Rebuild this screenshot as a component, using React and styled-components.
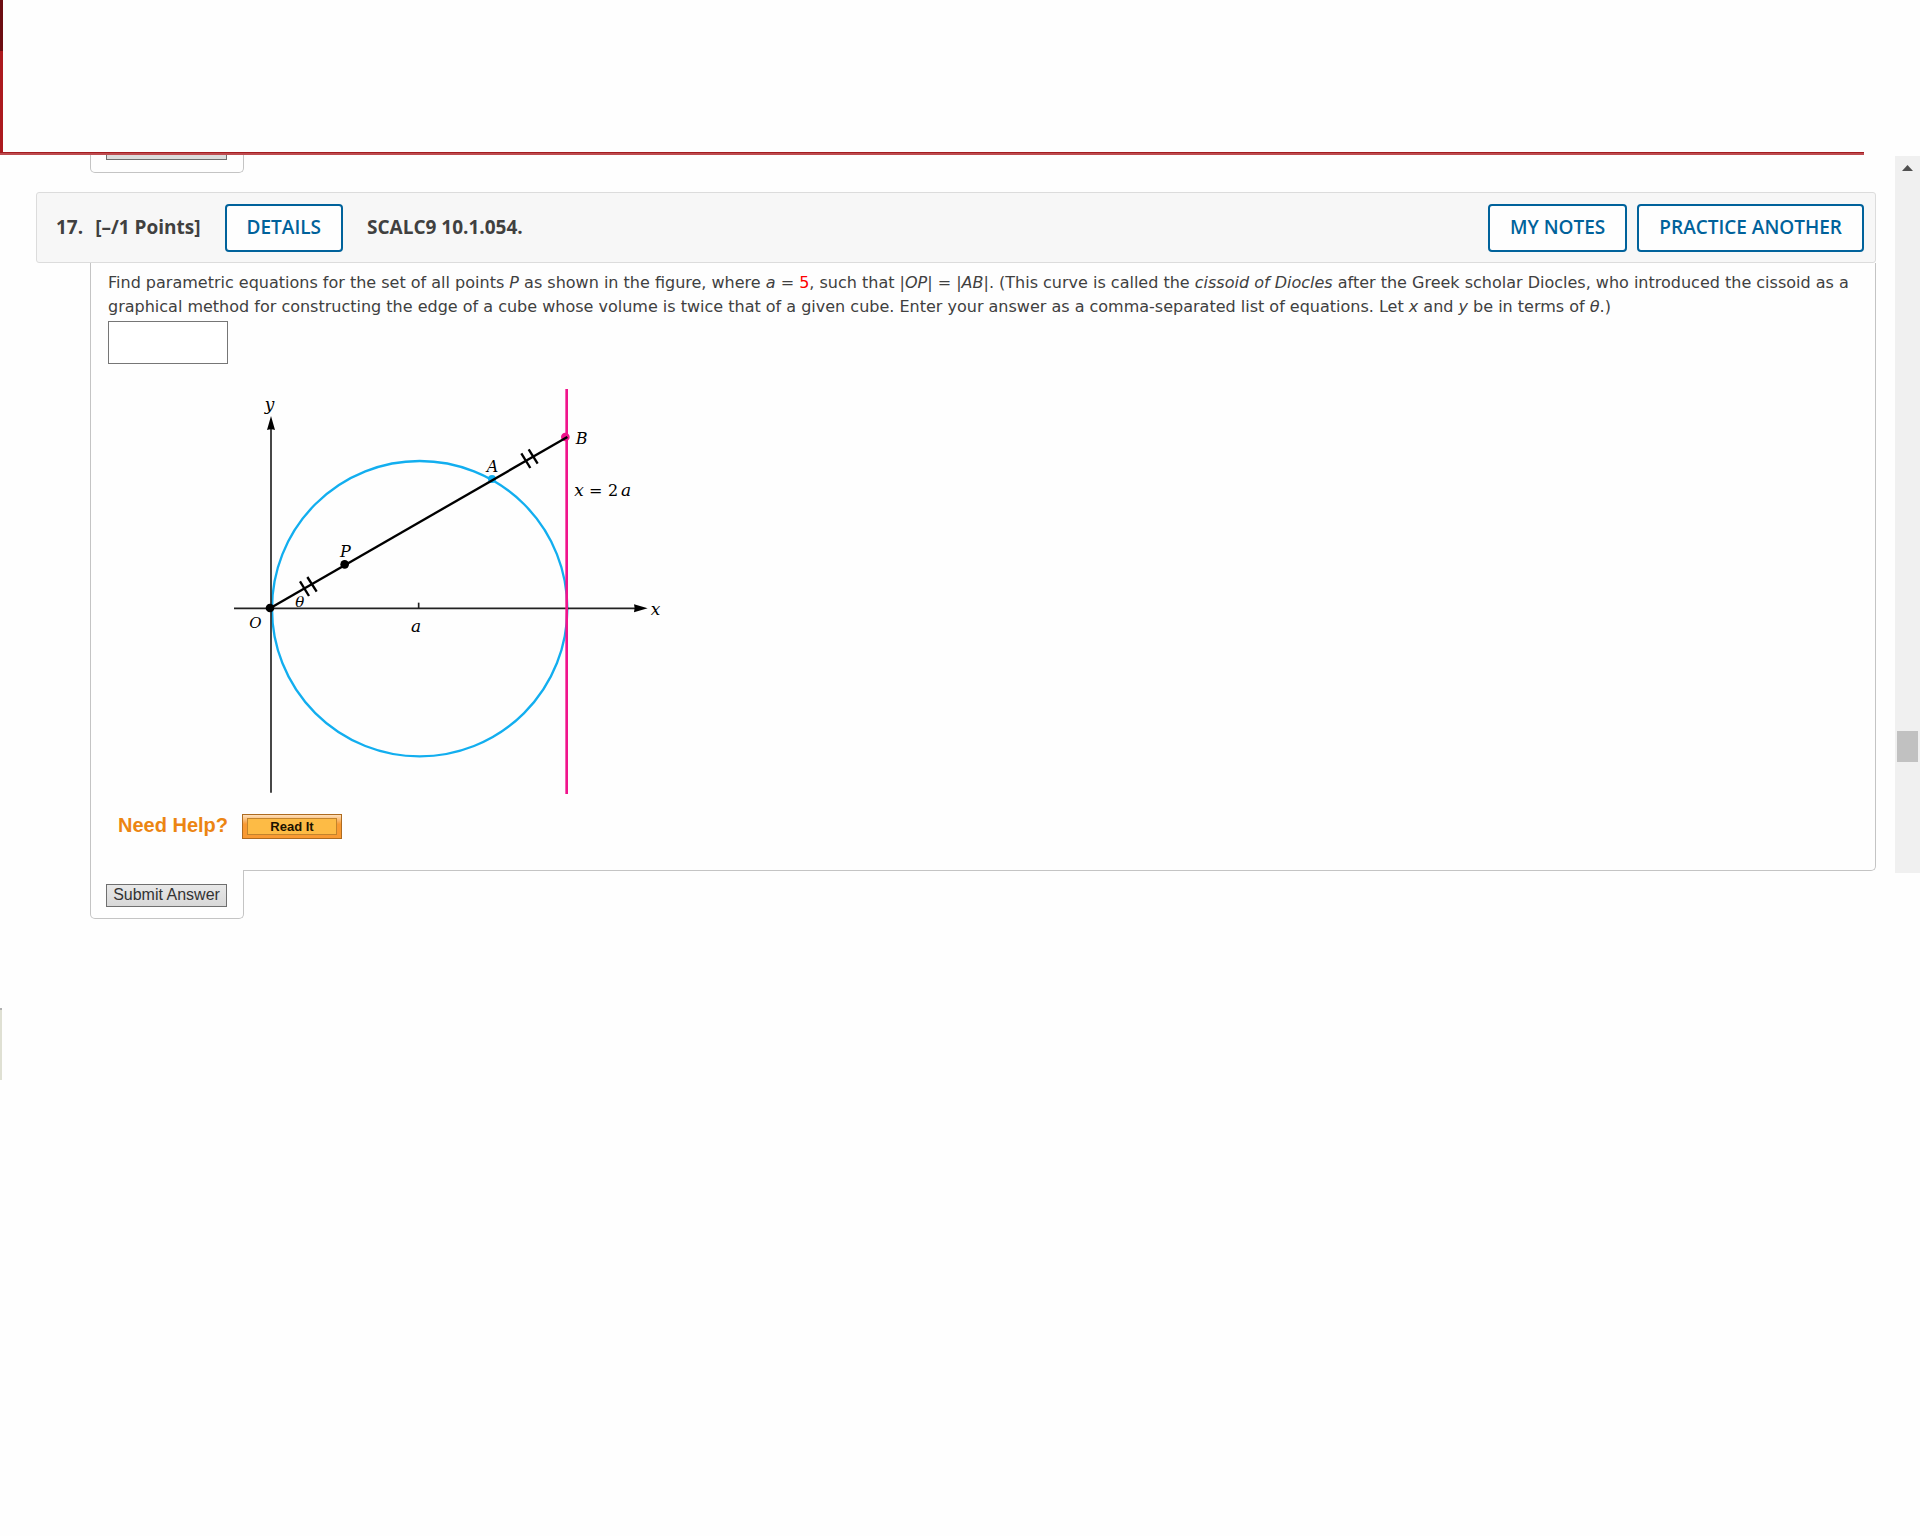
import React, { useState } from 'react';
import styled, { createGlobalStyle } from 'styled-components';

const GlobalStyle = createGlobalStyle`
  * {
    box-sizing: border-box;
  }

  body {
    margin: 0;
    background: #fefefe;
    color: #404040;
    font-family: 'DejaVu Sans', Verdana, sans-serif;
  }
`;

// Styled Components
const Banner = styled.header`
  display: flex;
  height: 152px;
`;

const BannerEdge = styled.div`
  width: 3px;
  background: linear-gradient(#6d0d12 51px, #ac1a1e 51px);
`;

const BannerRule = styled.div`
  height: 3px;
  margin-right: 56px;
  border-top: 1px solid #a51c20;
  background: #bd4b4f;
`;

const Workspace = styled.div`
  display: flex;
`;

const Main = styled.main`
  flex: 1;
  min-width: 0;
  padding: 0 19px 2px 36px;
`;

const SubmitTab = styled.div`
  position: relative;
  width: 154px;
  margin-left: ${({ $indent }) => $indent}px;
  padding: ${({ $clipped }) => ($clipped ? '0 16px 12px 15px' : '14px 16px 11px 15px')};
  border: 1px solid #c4c4c4;
  border-top: none;
  border-radius: 0 0 5px 5px;
  background: #fefefe;
`;

const CutButton = styled.div`
  height: 5px;
  border: 1px solid #6f6f6f;
  border-top: none;
  background: #dcdcdc;
`;

const SubmitRow = styled.div`
  margin-top: -3px;
`;

const SubmitButton = styled.button`
  display: block;
  width: 100%;
  height: 23px;
  padding: 0 0 2px;
  border: 1px solid #6f6f6f;
  border-radius: 0;
  background: linear-gradient(#e8e8e8, #d8d8d8);
  color: #333;
  font-family: 'Liberation Sans', Arial, sans-serif;
  font-size: 16px;
  line-height: 18px;
`;

const QuestionBar = styled.div`
  display: flex;
  align-items: center;
  margin-top: 19px;
  padding: 11px 11px 10px;
  border: 1px solid #dcdcdc;
  border-radius: 3px;
  background: #f7f7f7;
  font-family: 'Open Sans', sans-serif;
  font-size: 19px;
  font-weight: 700;
  line-height: 24px;
`;

const BarText = styled.span`
  padding-bottom: 2px;
`;

const Number = styled(BarText)`
  margin-left: 8px;
`;

const Points = styled(BarText)`
  margin: 0 24px 0 12px;
`;

const Source = styled(BarText)`
  flex: 1;
  margin-left: 24px;
`;

const BarButton = styled.button`
  height: 48px;
  padding: 0 20px 2px;
  border: 2px solid #00629b;
  border-radius: 4px;
  background: #fefefe;
  color: #00629b;
  font-family: inherit;
  font-size: 19px;
  font-weight: 600;
  white-space: nowrap;

  & + & {
    margin-left: 10px;
  }
`;

const QuestionBody = styled.section`
  margin-left: 54px;
  padding: 8px 17px 31px;
  border: 1px solid #c4c4c4;
  border-top: none;
  border-radius: 0 0 5px 0;
`;

const Prompt = styled.p`
  margin: 0;
  font-size: 16px;
  line-height: 24px;
`;

const Value = styled.span`
  color: #ff0000;
`;

const AnswerInput = styled.input`
  display: block;
  width: 120px;
  height: 43px;
  margin-top: 2px;
  padding: 0 8px;
  border: 1px solid #767676;
  background: #fff;
  font-size: 16px;
`;

const Figure = styled.svg`
  display: block;
  width: 460px;
  height: 430px;
  margin: 16px 0 0 112px;

  text {
    fill: #000;
    font-family: 'DejaVu Serif', 'Liberation Serif', serif;
    font-size: 48px;
    font-style: italic;
  }

  .large {
    font-size: 51px;
  }

  .small {
    font-size: 45px;
  }

  .upright {
    font-style: normal;
  }
`;

const HelpRow = styled.div`
  display: flex;
  align-items: center;
  margin: 4px 0 0 10px;
  gap: 14px;
  font-family: 'Liberation Sans', Arial, sans-serif;
  font-weight: 700;
`;

const HelpLabel = styled.span`
  padding-bottom: 2px;
  color: #ec8512;
  font-size: 20px;
  line-height: 23px;
`;

const HelpButton = styled.button`
  width: 100px;
  height: 25px;
  padding: 3px 4px;
  border: 1px solid #ae6b20;
  border-radius: 0;
  background: linear-gradient(#fde0bd, #f99a32 40%);
  font: inherit;

  span {
    display: block;
    border: 1px solid #c2832c;
    background: #fdbb45;
    color: #1c1200;
    font-size: 13px;
    line-height: 15px;
  }
`;

const ScrollBar = styled.div`
  display: flex;
  flex-direction: column;
  justify-content: space-between;
  width: 25px;
  margin-top: 1px;
  padding: 0 2px 111px;
  background: #f0f0f0;
`;

const ScrollUp = styled.button`
  height: 24px;
  padding: 0 0 0 5px;
  border: none;
  background: none;

  svg {
    display: block;
  }
`;

const ScrollThumb = styled.div`
  height: 31px;
  background: #c1c1c1;
`;

const EdgeStrip = styled.div`
  width: 2px;
  height: 72px;
  margin-top: 89px;
  border-top: 2px solid #b0b0b0;
  background: #dfe0d3;
`;

function CissoidFigure() {
  return (
    <Figure viewBox="0 0 1380 1290" role="img" aria-label="Cissoid of Diocles">
      <circle cx="599" cy="686" r="443" fill="none" stroke="#12aeef" strokeWidth="7" />
      <g stroke="#222" strokeWidth="5">
        <path d="M153 140V1238" />
        <path d="M42 685H1250" />
        <path d="M596 668V685" />
      </g>
      <path d="M153 108L165 150Q153 145 141 150Z" />
      <path d="M1283 685L1242 697Q1246 685 1242 673Z" />
      <path d="M1040 27V1242" stroke="#f0148c" strokeWidth="8" />
      <circle cx="1036" cy="171" r="13" fill="#f0148c" />
      <circle cx="816" cy="297" r="12" fill="#12aeef" />
      <path d="M150 685L1042 171" stroke="#000" strokeWidth="7" />
      <g stroke="#000" strokeWidth="7">
        <path d="M240 604L267 648" />
        <path d="M262 591L290 635" />
        <path d="M904 220L931 264" />
        <path d="M926 208L953 251" />
      </g>
      <circle cx="150" cy="684" r="13" />
      <circle cx="374" cy="553" r="13" />
      <text className="large" x="134" y="91">y</text>
      <text className="large" x="1292" y="705">x</text>
      <text x="1067" y="193">B</text>
      <text x="800" y="276">A</text>
      <text x="360" y="532">P</text>
      <text className="small" x="88" y="744">O</text>
      <text className="small" x="226" y="682">θ</text>
      <text className="large" x="573" y="756">a</text>
      <text className="large" x="1063" y="348">x</text>
      <text className="upright" x="1107" y="348">=</text>
      <text className="upright" x="1164" y="348">2</text>
      <text className="large" x="1203" y="348">a</text>
    </Figure>
  );
}

function App() {
  const [answer, setAnswer] = useState('');

  return (
    <>
      <GlobalStyle />
      <Banner>
        <BannerEdge />
      </Banner>
      <BannerRule />

      <Workspace>
        <Main>
          <SubmitTab $indent={54} $clipped>
            <CutButton />
          </SubmitTab>

          <QuestionBar>
            <Number>17.</Number>
            <Points>[–/1 Points]</Points>
            <BarButton type="button">DETAILS</BarButton>
            <Source>SCALC9 10.1.054.</Source>
            <BarButton type="button">MY NOTES</BarButton>
            <BarButton type="button">PRACTICE ANOTHER</BarButton>
          </QuestionBar>

          <QuestionBody>
            <Prompt id="prompt">
              Find parametric equations for the set of all points <i>P</i> as shown in the figure,
              where <i>a</i> = <Value>5</Value>, such that |<i>OP</i>| = |<i>AB</i>|. (This curve is
              called the <i>cissoid of Diocles</i> after the Greek scholar Diocles, who introduced
              the cissoid as a{' '}
              graphical method for constructing the edge of a cube whose volume is
              twice that of a given cube. Enter your answer as a comma-separated list of equations.
              Let <i>x</i> and <i>y</i> be in terms of <i>θ</i>.)
            </Prompt>
            <AnswerInput
              type="text"
              aria-labelledby="prompt"
              value={answer}
              onChange={(event) => setAnswer(event.target.value)}
            />
            <CissoidFigure />
            <HelpRow>
              <HelpLabel>Need Help?</HelpLabel>
              <HelpButton type="button">
                <span>Read It</span>
              </HelpButton>
            </HelpRow>
          </QuestionBody>
        </Main>

        <ScrollBar>
          <ScrollUp type="button" aria-label="Scroll up">
            <svg width="11" height="6" viewBox="0 0 11 6">
              <path d="M0 6L5.5 0L11 6Z" fill="#505050" />
            </svg>
          </ScrollUp>
          <ScrollThumb />
        </ScrollBar>
      </Workspace>

      {/* sits on the body's bottom border so the two outlines join */}
      <SubmitRow>
        <SubmitTab $indent={90}>
          <SubmitButton type="submit">Submit Answer</SubmitButton>
        </SubmitTab>
      </SubmitRow>
      <EdgeStrip />
    </>
  );
}

export default App;
